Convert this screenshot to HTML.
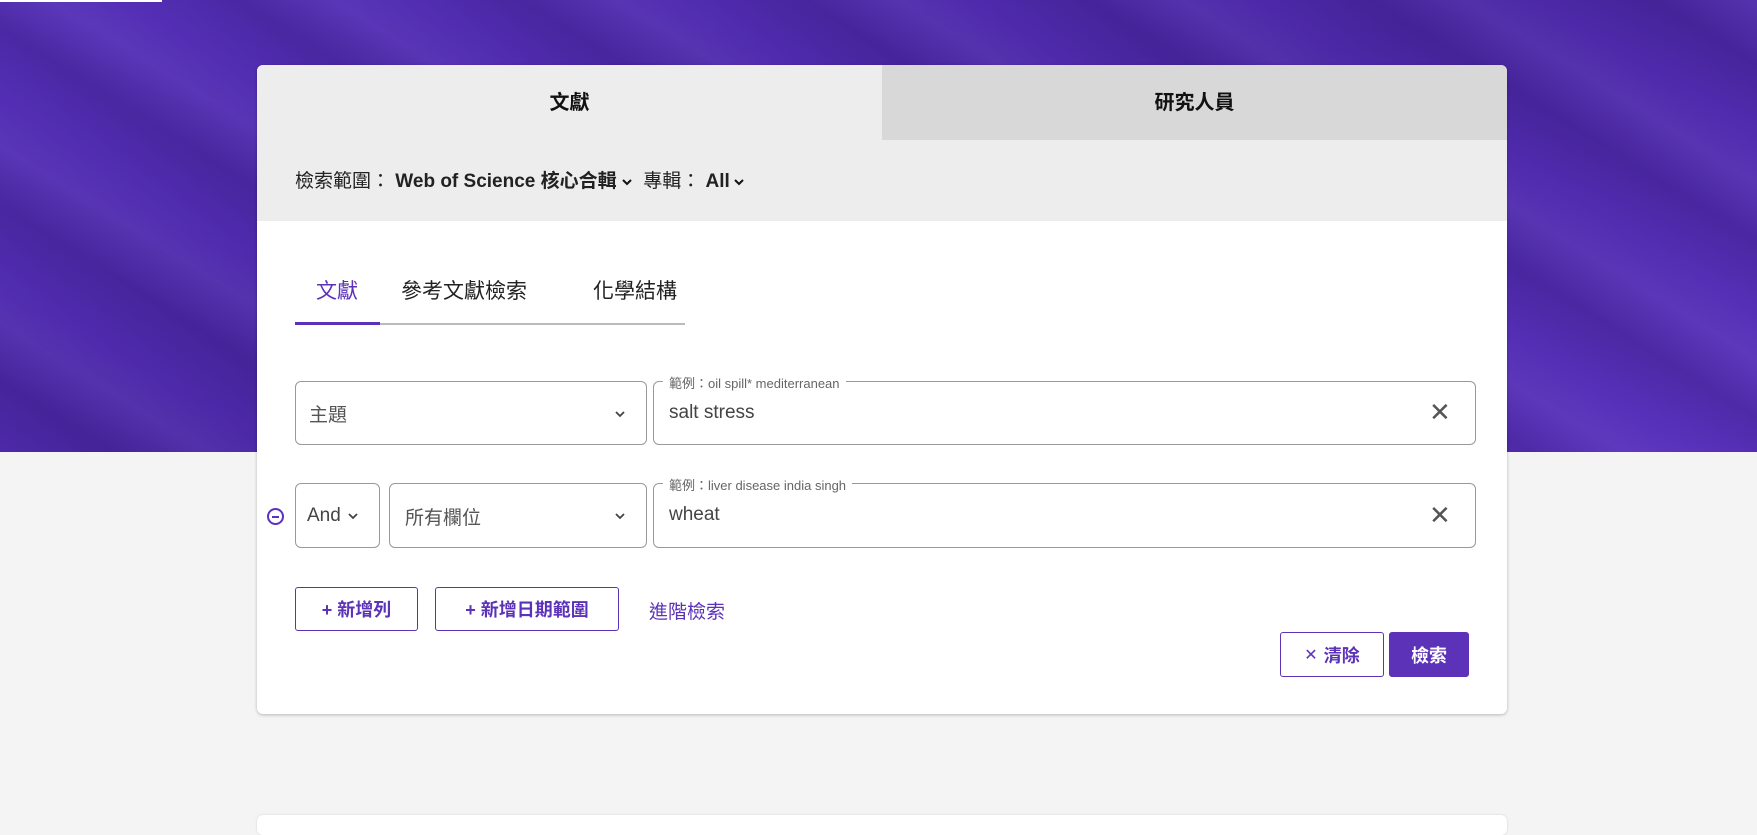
<!DOCTYPE html>
<html><head><meta charset="utf-8"><style>
*{box-sizing:border-box;margin:0;padding:0}
body{width:1757px;height:826px;overflow:hidden;background:#f4f4f4;font-family:"Liberation Sans","Noto Sans CJK TC",sans-serif;color:#222;position:relative}
.banner{position:absolute;left:0;top:0;width:1757px;height:452px;background:
repeating-linear-gradient(32deg,rgba(30,10,80,0) 0px,rgba(30,10,80,.18) 60px,rgba(255,255,255,.04) 110px,rgba(30,10,80,0) 150px),
linear-gradient(160deg,#5530b8,#4b28a6 50%,#5a32bd);}
.topline{position:absolute;left:0;top:0;width:162px;height:2px;background:#fff}
.card{position:absolute;left:257px;top:65px;width:1250px;height:649px;background:#fff;border-radius:6px;box-shadow:0 1px 3px rgba(0,0,0,.25);overflow:hidden}
.tab{position:absolute;top:0;height:70px;width:625px;display:flex;align-items:center;justify-content:center;font-weight:bold;font-size:20px;color:#111}
.tabbg{position:absolute;top:0;height:75px;width:625px}
.scope{position:absolute;top:75px;left:0;width:1250px;height:81px;background:#ededed}
.a{position:absolute;font-size:20px}
.ul{position:absolute;left:38px;top:258px;width:390px;height:2px;background:#bbb}
.ul2{position:absolute;left:38px;top:257px;width:85px;height:3px;background:#5b32b8}
.box{position:absolute;border:1px solid #999;border-radius:6px;background:#fff}
.lbl{position:absolute;background:#fff;font-size:13px;color:#666;padding:0 6px}
.val{position:absolute;font-size:19px;color:#444}
.btn{position:absolute;border:1px solid #5b32b8;border-radius:3px;color:#5b32b8;font-size:18px;font-weight:bold;display:flex;align-items:center;justify-content:center}
.x{position:absolute;font-size:26px;color:#555}
</style></head><body>
<div class="banner"></div><div class="topline"></div>
<div class="card">
 <div class="tabbg" style="left:0;background:#ededed"></div>
 <div class="tabbg" style="left:625px;background:#d8d8d8"></div>
 <div class="tab" style="left:0">文獻</div>
 <div class="tab" style="left:625px">研究人員</div>
 <div class="scope"></div>
 <div class="a" style="left:38px;top:101px;font-size:19px">檢索範圍：&nbsp;<b>Web of Science 核心合輯</b><svg width="12" height="9" style="margin-left:4px" viewBox="0 0 12 9"><path d="M2 2l4 4 4-4" stroke="#111" stroke-width="2" fill="none"/></svg>&nbsp;&nbsp;專輯：&nbsp;<b>All</b><svg width="12" height="9" style="margin-left:3px" viewBox="0 0 12 9"><path d="M2 2l4 4 4-4" stroke="#111" stroke-width="2" fill="none"/></svg></div>
 <div class="a" style="left:59px;top:210px;color:#5b32b8;font-size:21px">文獻</div>
 <div class="a" style="left:144px;top:210px;font-size:21px">參考文獻檢索</div>
 <div class="a" style="left:336px;top:210px;font-size:21px">化學結構</div>
 <div class="ul"></div><div class="ul2"></div>

 <div class="box" style="left:38px;top:316px;width:352px;height:64px"></div>
 <div class="val" style="left:52px;top:335px;color:#555">主題</div>
 <svg style="position:absolute;left:357px;top:345px" width="12" height="9" viewBox="0 0 12 9"><path d="M2 2l4 4 4-4" stroke="#444" stroke-width="1.8" fill="none"/></svg>
 <div class="box" style="left:396px;top:316px;width:823px;height:64px"></div>
 <div class="lbl" style="left:406px;top:308px">範例：oil spill* mediterranean</div>
 <div class="val" style="left:412px;top:337px">salt stress</div>
 <div class="x" style="left:1172px;top:332px">✕</div>

 <div style="position:absolute;left:10px;top:443px;width:17px;height:17px;border:2px solid #5b32b8;border-radius:50%"><div style="position:absolute;left:3px;top:5.5px;width:7px;height:2px;background:#5b32b8"></div></div>
 <div class="box" style="left:38px;top:418px;width:85px;height:65px"></div>
 <div class="val" style="left:50px;top:440px">And</div>
 <svg style="position:absolute;left:90px;top:447px" width="12" height="9" viewBox="0 0 12 9"><path d="M2 2l4 4 4-4" stroke="#444" stroke-width="1.8" fill="none"/></svg>
 <div class="box" style="left:132px;top:418px;width:258px;height:65px"></div>
 <div class="val" style="left:148px;top:438px;color:#555">所有欄位</div>
 <svg style="position:absolute;left:357px;top:447px" width="12" height="9" viewBox="0 0 12 9"><path d="M2 2l4 4 4-4" stroke="#444" stroke-width="1.8" fill="none"/></svg>
 <div class="box" style="left:396px;top:418px;width:823px;height:65px"></div>
 <div class="lbl" style="left:406px;top:410px">範例：liver disease india singh</div>
 <div class="val" style="left:412px;top:439px">wheat</div>
 <div class="x" style="left:1172px;top:435px">✕</div>

 <div class="btn" style="left:38px;top:522px;width:123px;height:44px">+ 新增列</div>
 <div class="btn" style="left:178px;top:522px;width:184px;height:44px">+ 新增日期範圍</div>
 <div class="a" style="left:392px;top:532px;color:#5b32b8;font-size:19px">進階檢索</div>

 <div class="btn" style="left:1023px;top:567px;width:104px;height:45px;font-weight:normal"><span style="font-size:16px;margin-right:6px">✕</span><b>清除</b></div>
 <div class="btn" style="left:1132px;top:567px;width:80px;height:45px;background:#5b32b8;color:#fff">檢索</div>
</div>
<div style="position:absolute;left:257px;top:815px;width:1250px;height:20px;background:#fff;border-radius:6px;box-shadow:0 0 2px rgba(0,0,0,.15)"></div>
</body></html>
